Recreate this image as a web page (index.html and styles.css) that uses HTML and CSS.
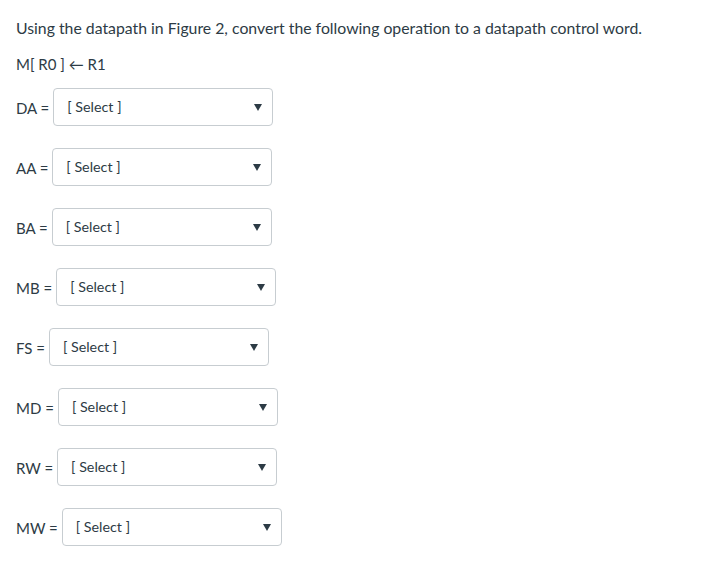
FILE: index.html
```html
<!DOCTYPE html>
<html>
<head>
<meta charset="utf-8">
<link rel="stylesheet" href="styles.css">
</head>
<body>
<div class="page">
  <p class="intro">Using the datapath in Figure 2, convert the following operation to a datapath control word.</p>
  <p class="op">M[ R0 ] ← R1</p>
  <div class="rows">
    <div class="row"><span class="label">DA =</span><div class="select"><span class="ph">[ Select ]</span><svg class="caret" width="8" height="7" viewBox="0 0 8 7"><polygon points="0,0 8,0 4,7" fill="#2d3b45"/></svg></div></div>
    <div class="row"><span class="label">AA =</span><div class="select"><span class="ph">[ Select ]</span><svg class="caret" width="8" height="7" viewBox="0 0 8 7"><polygon points="0,0 8,0 4,7" fill="#2d3b45"/></svg></div></div>
    <div class="row"><span class="label">BA =</span><div class="select"><span class="ph">[ Select ]</span><svg class="caret" width="8" height="7" viewBox="0 0 8 7"><polygon points="0,0 8,0 4,7" fill="#2d3b45"/></svg></div></div>
    <div class="row"><span class="label">MB =</span><div class="select"><span class="ph">[ Select ]</span><svg class="caret" width="8" height="7" viewBox="0 0 8 7"><polygon points="0,0 8,0 4,7" fill="#2d3b45"/></svg></div></div>
    <div class="row"><span class="label">FS =</span><div class="select"><span class="ph">[ Select ]</span><svg class="caret" width="8" height="7" viewBox="0 0 8 7"><polygon points="0,0 8,0 4,7" fill="#2d3b45"/></svg></div></div>
    <div class="row"><span class="label">MD =</span><div class="select"><span class="ph">[ Select ]</span><svg class="caret" width="8" height="7" viewBox="0 0 8 7"><polygon points="0,0 8,0 4,7" fill="#2d3b45"/></svg></div></div>
    <div class="row"><span class="label">RW =</span><div class="select"><span class="ph">[ Select ]</span><svg class="caret" width="8" height="7" viewBox="0 0 8 7"><polygon points="0,0 8,0 4,7" fill="#2d3b45"/></svg></div></div>
    <div class="row"><span class="label">MW =</span><div class="select"><span class="ph">[ Select ]</span><svg class="caret" width="8" height="7" viewBox="0 0 8 7"><polygon points="0,0 8,0 4,7" fill="#2d3b45"/></svg></div></div>
  </div>
</div>
</body>
</html>
```

FILE: styles.css
```css
html, body {
  margin: 0;
  padding: 0;
  background: #ffffff;
}
.page {
  padding: 16px 16px;
  font-family: Lato, "Liberation Sans", sans-serif;
  color: #2d3b45;
  font-size: 15px;
}
.intro {
  margin: 0 0 12px 0;
  line-height: 24px;
  font-size: 15.8px;
}
.op {
  margin: 0 0 12px 0;
  line-height: 24px;
}
.rows {
  display: flex;
  flex-direction: column;
  gap: 22px;
}
.row {
  display: flex;
  align-items: flex-end;
  gap: 4px;
}
.label {
  font-size: 15px;
  line-height: 20px;
  padding-bottom: 8px;
}
.select {
  box-sizing: border-box;
  width: 220px;
  height: 38px;
  border: 1px solid #c7cdd1;
  border-radius: 4px;
  display: flex;
  align-items: center;
  justify-content: space-between;
  padding: 0 10px 2px 13px;
  font-size: 14.3px;
}
.ph {
  color: #2d3b45;
}
.caret {
  display: block;
  margin-top: 2px;
}
```
